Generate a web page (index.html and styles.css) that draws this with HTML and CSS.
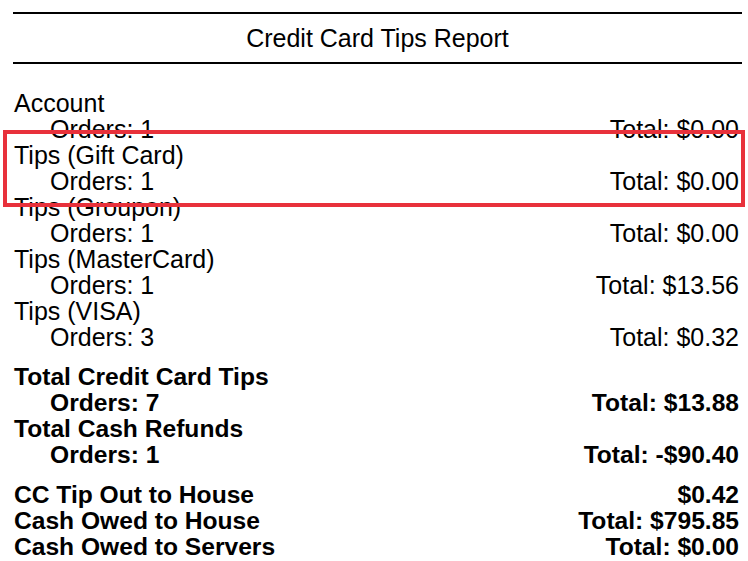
FILE: index.html
```html
<!DOCTYPE html>
<html>
<head>
<meta charset="utf-8">
<link rel="stylesheet" href="styles.css">
</head>
<body>
<div class="report">
  <div class="title">Credit Card Tips Report</div>
  <div class="section first">
    <div class="row"><span>Account</span></div>
    <div class="row sub"><span>Orders: 1</span><span>Total: $0.00</span></div>
    <div class="row"><span>Tips (Gift Card)</span></div>
    <div class="row sub"><span>Orders: 1</span><span>Total: $0.00</span></div>
    <div class="row"><span>Tips (Groupon)</span></div>
    <div class="row sub"><span>Orders: 1</span><span>Total: $0.00</span></div>
    <div class="row"><span>Tips (MasterCard)</span></div>
    <div class="row sub"><span>Orders: 1</span><span>Total: $13.56</span></div>
    <div class="row"><span>Tips (VISA)</span></div>
    <div class="row sub"><span>Orders: 3</span><span>Total: $0.32</span></div>
  </div>
  <div class="section bold">
    <div class="row"><span>Total Credit Card Tips</span></div>
    <div class="row sub"><span>Orders: 7</span><span>Total: $13.88</span></div>
    <div class="row"><span>Total Cash Refunds</span></div>
    <div class="row sub"><span>Orders: 1</span><span>Total: -$90.40</span></div>
  </div>
  <div class="section bold">
    <div class="row"><span>CC Tip Out to House</span><span>$0.42</span></div>
    <div class="row"><span>Cash Owed to House</span><span>Total: $795.85</span></div>
    <div class="row"><span>Cash Owed to Servers</span><span>Total: $0.00</span></div>
  </div>
  <div class="highlight"></div>
</div>
</body>
</html>
```

FILE: styles.css
```css
html, body {
  margin: 0;
  padding: 0;
  background: #ffffff;
}
body {
  font-family: "Liberation Sans", Arial, Helvetica, sans-serif;
  font-size: 25px;
  line-height: 26px;
  color: #000;
}
.report {
  position: relative;
  width: 748px;
  height: 561px;
  overflow: hidden;
}
.title {
  margin: 12px 6px 0 13px;
  border-top: 2px solid #000;
  border-bottom: 2px solid #000;
  padding: 11px 0;
  text-align: center;
}
.section {
  padding: 0 9px 0 14px;
  margin-top: 14px;
}
.section.first {
  margin-top: 26px;
}
.section.bold {
  font-weight: bold;
  font-size: 24.6px;
}
.row {
  display: flex;
  justify-content: space-between;
  height: 26px;
  white-space: nowrap;
}
.row.sub {
  padding-left: 36px;
}
.highlight {
  position: absolute;
  left: 3px;
  top: 130px;
  width: 734px;
  height: 69px;
  border: 4px solid #e8313b;
}
```
